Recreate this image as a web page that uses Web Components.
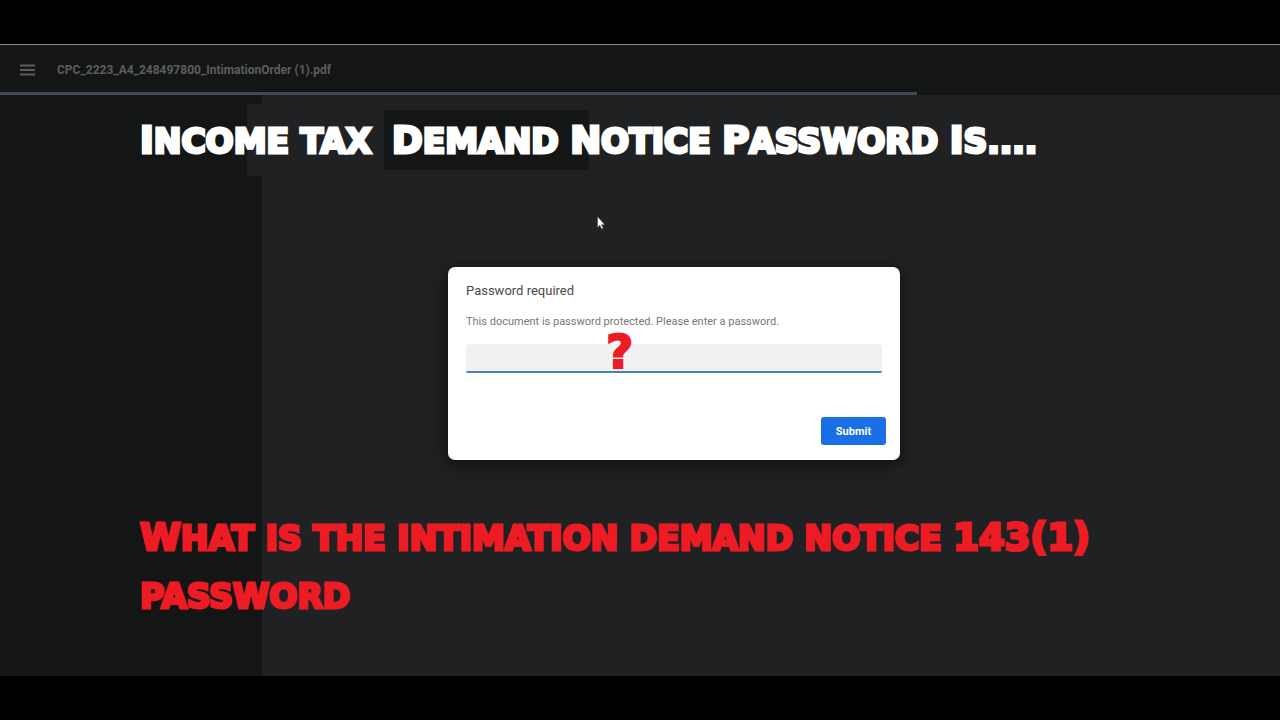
<!DOCTYPE html>
<html lang="en">
<head>
<meta charset="utf-8">
<title>Income tax demand notice password</title>
<style>
body { margin: 0; background: #000; font-family: Roboto, "Liberation Sans", sans-serif; }
</style>
</head>
<body>
<title-card></title-card>

<template id="title-card">
  <style>
    :host { display: flex; flex-direction: column; min-height: 100vh; box-sizing: border-box; padding: 44px 0; background: #000; }
    main { flex: 1; display: grid; grid-template: 1fr / 262px 1fr; background: #202123; }
    aside { grid-area: 1 / 1; background: #141616; }
    .content { grid-area: 1 / 1 / 2 / 3; position: relative; display: flex; flex-direction: column; padding-top: 9px; }
    .headline { display: flex; align-items: center; margin-left: 140px; }
    password-dialog { align-self: center; margin: 91px 0 50px 68px; }
    .question { margin-left: 140px; }
    mouse-pointer { position: absolute; left: 597px; top: 121px; }
  </style>
  <pdf-toolbar>CPC_2223_A4_248497800_IntimationOrder (1).pdf</pdf-toolbar>
  <main>
    <aside aria-label="Thumbnails"></aside>
    <div class="content">
      <div class="headline">
        <caption-text tone="light"><b>I</b>ncome tax</caption-text>
        <caption-text tone="dark"><b>D</b>emand <b>N</b>otice <b>P</b>assword <b>I</b>s....</caption-text>
      </div>
      <password-dialog></password-dialog>
      <caption-text class="question" tone="red"><b>W</b>hat is the intimation demand notice <b>143(1)</b><br>password</caption-text>
      <mouse-pointer></mouse-pointer>
    </div>
  </main>
</template>

<template id="pdf-toolbar">
  <style>
    :host { display: block; background: #141616; border-top: 1px solid #8a8a8a; color: #5c5d5d; }
    header { display: flex; align-items: center; gap: 21px; height: 47px; padding: 2px 18px 0; box-sizing: border-box; }
    button { display: flex; padding: 0; border: 0; background: none; color: inherit; }
    h1 { margin: 0; font-size: 12px; line-height: 16px; font-weight: 700; }
    progress { display: block; width: 100%; height: 3px; border: 0; appearance: none; background: #141616; }
    progress::-webkit-progress-bar { background: #141616; }
    progress::-webkit-progress-value { background: #414959; }
  </style>
  <header>
    <button aria-label="Menu"><svg width="18" height="14" viewBox="0 0 18 14"><path d="M2 2.5h15M2 7h15M2 11.5h15" stroke="currentColor" stroke-width="2"/></svg></button>
    <h1><slot></slot></h1>
  </header>
  <progress value="917" max="1280" aria-label="Loading"></progress>
</template>

<template id="caption-text">
  <style>
    :host { display: block; font-family: "DejaVu Sans", sans-serif; font-weight: 700; font-size: 33px; line-height: 58px; text-transform: uppercase; white-space: nowrap; -webkit-text-stroke: 3px currentColor; }
    :host([tone="light"]) { color: #fff; width: 244px; line-height: 68px; padding-top: 4px; background: linear-gradient(90deg, transparent 107px, #202123 107px); }
    :host([tone="dark"]) { color: #fff; line-height: 56px; padding: 4px 0 0 8px; background: linear-gradient(90deg, #141616 205px, transparent 205px); }
    :host([tone="red"]) { color: #ed1c24; }
    ::slotted(b) { font-size: 37px; line-height: 1; font-weight: 700; }
  </style>
  <slot></slot>
</template>

<template id="password-dialog">
  <style>
    :host { display: block; width: 452px; }
    form { position: relative; box-sizing: border-box; min-height: 193px; padding: 15px 18px; border-radius: 7px; background: #fff; box-shadow: 0 4px 16px #0009; display: flex; flex-direction: column; }
    h2 { margin: 0; font-size: 13px; line-height: 18px; font-weight: 400; color: #48494b; }
    label { margin-top: 14px; font-size: 11px; line-height: 16px; color: #77787a; }
    input { margin-top: 14px; height: 29px; width: 100%; box-sizing: border-box; border: 0; border-bottom: 2px solid #4a7fc4; border-radius: 4px 4px 2px 2px; background: #f0f1f1; padding: 0 8px; outline: 0; font: inherit; }
    button { align-self: flex-end; margin: 44px -4px 0 0; width: 65px; height: 28px; padding: 2px 0 0; border: 0; border-radius: 3px; background: #1a6fe6; color: #fff; font: 700 11px/26px Roboto, sans-serif; }
    .mark { position: absolute; left: 158px; top: 60px; font: 700 47px/50px "DejaVu Sans", sans-serif; color: #ed1c24; -webkit-text-stroke: 2px currentColor; }
  </style>
  <form>
    <h2>Password required</h2>
    <label for="pw">This document is password protected. Please enter a password.</label>
    <input id="pw" type="password">
    <button type="button">Submit</button>
    <span class="mark">?</span>
  </form>
</template>

<template id="mouse-pointer">
  <style>:host { display: block; } svg { display: block; }</style>
  <svg width="9" height="14" viewBox="0 0 9 14"><path d="M.5.5v11l2.3-2.2 1.8 3.8 1.7-.8-1.7-3.6h3.2z" fill="#fff" stroke="#333" stroke-width=".5"/></svg>
</template>

<script>
for (const name of ["mouse-pointer", "caption-text", "pdf-toolbar", "password-dialog", "title-card"]) {
  customElements.define(name, class extends HTMLElement {
    constructor() {
      super();
      this.attachShadow({ mode: "open" }).append(document.getElementById(name).content.cloneNode(true));
    }
  });
}
</script>
</body>
</html>
